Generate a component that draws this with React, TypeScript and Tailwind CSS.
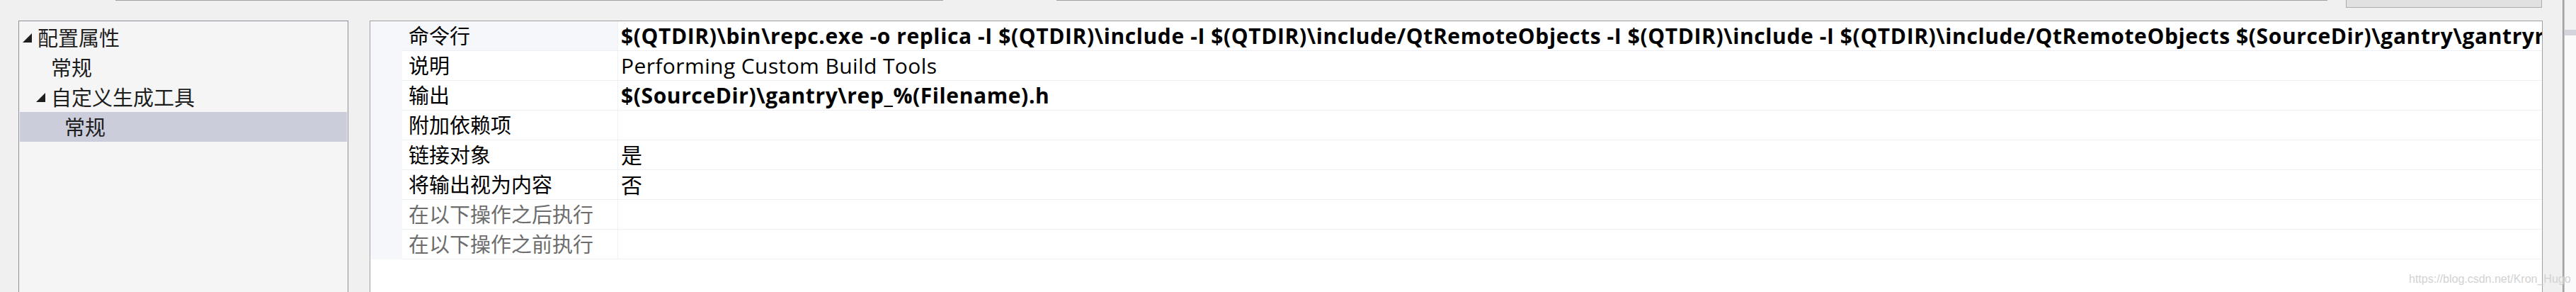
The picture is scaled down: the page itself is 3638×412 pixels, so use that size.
import React from "react";

// Property pages dialog — custom build tool settings

const FONT = { fontFamily: '"Open Sans", "Noto Sans CJK SC", sans-serif' };

type Row = { name: string; value?: string; bold?: boolean; dim?: boolean };

const ROWS: Row[] = [
  {
    name: "命令行",
    value:
      "$(QTDIR)\\bin\\repc.exe -o replica -I $(QTDIR)\\include -I $(QTDIR)\\include/QtRemoteObjects -I $(QTDIR)\\include -I $(QTDIR)\\include/QtRemoteObjects $(SourceDir)\\gantry\\gantryremote.rep $(SourceDir)\\gantry\\rep_%(Filename).h",
    bold: true,
  },
  { name: "说明", value: "Performing Custom Build Tools" },
  { name: "输出", value: "$(SourceDir)\\gantry\\rep_%(Filename).h", bold: true },
  { name: "附加依赖项" },
  { name: "链接对象", value: "是" },
  { name: "将输出视为内容", value: "否" },
  { name: "在以下操作之后执行", dim: true },
  { name: "在以下操作之前执行", dim: true },
];

function Expander() {
  return (
    <svg width="13" height="13" viewBox="0 0 13 13" className="shrink-0">
      <polygon points="13,0 13,13 0,13" fill="#1e1e1e" />
    </svg>
  );
}

function TreeItem({ label, level, open, selected }: { label: string; level: number; open?: boolean; selected?: boolean }) {
  return (
    <div
      className={`h-[42px] flex items-center ${selected ? "bg-[#cbcdda]" : ""}`}
      style={{ paddingLeft: 4 + level * 19 }}
    >
      <div className="w-[21px] flex items-center">{open && <Expander />}</div>
      <span className="text-[29px] text-[#1e1e1e] leading-none">{label}</span>
    </div>
  );
}

export default function App() {
  return (
    <div className="w-[3638px] h-[412px] bg-[#f0f0f0] flex overflow-hidden relative" style={FONT}>
      <div className="w-[3619px] flex flex-col">
        {/* top strip: tail of tab strip and a button above */}
        <div className="h-[29px] flex items-start shrink-0">
          <div className="w-[163px]" />
          <div className="w-[1169px] h-px bg-[#a0a0a0]" />
          <div className="w-[160px]" />
          <div className="w-[1795px] h-px bg-[#a0a0a0]" />
          <div className="w-[26px]" />
          <div className="w-[277px] h-[11px] bg-[#e1e1e1] border border-t-0 border-[#adadad]" />
        </div>

        <div className="flex flex-1 pl-[26px]">
          {/* tree */}
          <div className="w-[466px] bg-[#f5f5f5] border border-b-0 border-[#8e8f9a] pt-[2px] px-px">
            <TreeItem label="配置属性" level={0} open />
            <TreeItem label="常规" level={1} />
            <TreeItem label="自定义生成工具" level={1} open />
            <TreeItem label="常规" level={2} selected />
          </div>

          <div className="w-[30px]" />

          {/* property grid */}
          <div className="w-[3069px] bg-white border border-b-0 border-[#a0a0a0] overflow-hidden">
            <div className="flex">
              <div className="w-[45px] bg-[#f5f7fb] shrink-0" />
              <div className="flex-1 min-w-0">
                {ROWS.map((r, i) => (
                  <div key={i} className="h-[42px] flex border-b border-[#eef0f6]">
                    <div
                      className={`w-[305px] shrink-0 border-r border-[#eef0f6] pl-[9px] text-[29px] leading-[41px] whitespace-nowrap ${
                        i === 0 ? "bg-[#f5f7fb]" : ""
                      } ${r.dim ? "text-[#6d6d6d]" : "text-black"}`}
                    >
                      {r.name}
                    </div>
                    <div
                      className={`flex-1 min-w-0 pl-[4px] text-[30px] leading-[41px] whitespace-nowrap overflow-hidden text-black ${
                        r.bold ? "font-bold tracking-[0.6px]" : "tracking-[0.4px]"
                      }`}
                    >
                      {r.value}
                    </div>
                  </div>
                ))}
              </div>
            </div>
          </div>
        </div>
      </div>

      {/* window edge shadow */}
      <div className="w-[19px] flex shrink-0">
        <div className="w-[3px] bg-gradient-to-r from-[#8a8a8a] to-[#d0d0d0]" />
        <div className="flex-1 flex flex-col">
          <div className="h-[42px] bg-[#f2f2f2]" />
          <div className="h-[8px] bg-[#d3d4de]" />
          <div className="flex-1 bg-[#fafafa]" />
        </div>
      </div>

      <div
        className="absolute left-[3402px] top-[382px] text-[16px] text-[#d2d2d2] whitespace-nowrap"
        style={{ fontFamily: '"Liberation Sans", Arial, sans-serif' }}
      >
        https://blog.csdn.net/Kron_Hugo
      </div>
    </div>
  );
}
